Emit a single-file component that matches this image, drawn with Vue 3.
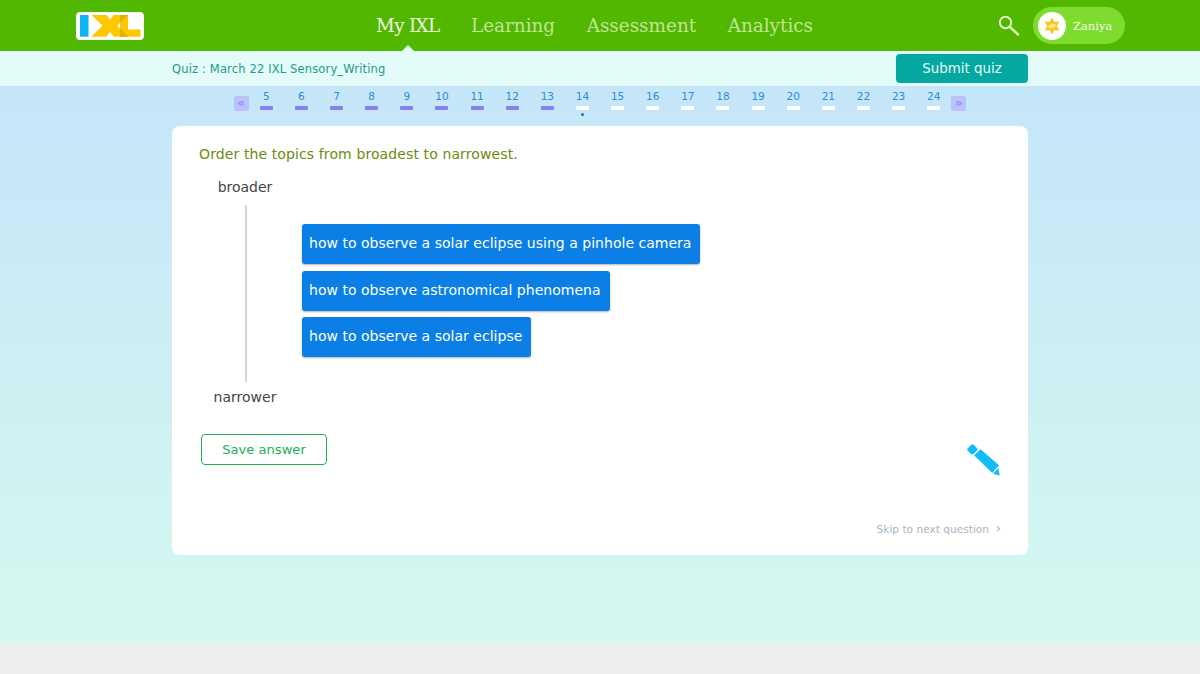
<script setup>
const questions = Array.from({ length: 20 }, (_, i) => i + 5)
const answers = [
  'how to observe a solar eclipse using a pinhole camera',
  'how to observe astronomical phenomena',
  'how to observe a solar eclipse'
]
const navItems = ['My IXL', 'Learning', 'Assessment', 'Analytics']
</script>

<template>
  <div class="page">
    <header class="topbar">
      <div class="logo">
        <svg width="68" height="28" viewBox="0 0 68 28">
          <defs>
            <clipPath id="lshape"><path d="M44 3h8v14.500h12.500V24.700H44z" /></clipPath>
          </defs>
          <rect x="0.500" y="0.500" width="67" height="27" rx="3" fill="#fff" stroke="#f4f4f4" />
          <rect x="4" y="3" width="8.500" height="21.700" fill="#0db4f2" />
          <path d="M15.500 3h15l3.500 4.500L37.500 3H52L41 13.700l11.500 11H38L34 20l-4 4.700H15l11.500-11z" fill="#fdc800" />
          <path d="M44 3h8v14.500h12.500V24.700H44z" fill="#fdc800" />
          <g clip-path="url(#lshape)">
            <path d="M15.500 3h15l3.500 4.500L37.500 3H52L41 13.700l11.500 11H38L34 20l-4 4.700H15l11.500-11z" fill="#e3b000" />
          </g>
        </svg>
      </div>
      <nav class="mainnav">
        <a v-for="(item, i) in navItems" :key="item" class="navlink" :class="{ active: i === 0 }">{{ item }}</a>
      </nav>
      <div class="topright">
        <svg class="search" width="22" height="22" viewBox="0 0 22 22" fill="none" stroke="#dff2c4">
          <circle cx="7.500" cy="7.500" r="5.700" stroke-width="2" />
          <path d="M12 12l8 7.500" stroke-width="2.400" stroke-linecap="round" />
        </svg>
        <div class="user">
          <span class="avatar">
            <svg width="18" height="18" viewBox="0 0 18 18">
              <path d="M9 .500l2.400 4.200 5-.1-2.500 4.400 2.500 4.400-5-.1L9 17.500l-2.400-4.200-5 .1 2.500-4.400-2.500-4.400 5 .1z" fill="#f6c821" />
              <ellipse cx="9" cy="9" rx="4" ry="2" fill="#f8e48c" transform="rotate(-20 9 9)" />
            </svg>
          </span>
          <span class="username">Zaniya</span>
        </div>
      </div>
    </header>

    <div class="subbar">
      <div class="quizname">Quiz : March 22 IXL Sensory_Writing</div>
      <button class="submit">Submit quiz</button>
    </div>

    <main class="content">
      <div class="pager">
        <span class="arrow">«</span>
        <div v-for="q in questions" :key="q" class="pg" :class="{ done: q < 14, current: q === 14 }">
          <span class="num">{{ q }}</span>
          <span class="bar"></span>
        </div>
        <span class="arrow">»</span>
      </div>

      <section class="card">
        <p class="prompt">Order the topics from broadest to narrowest.</p>
        <div class="sorter">
          <div class="scale">
            <span class="label">broader</span>
            <span class="line"></span>
            <span class="label">narrower</span>
          </div>
          <div class="answers">
            <div v-for="a in answers" :key="a" class="answer">{{ a }}</div>
          </div>
        </div>
        <div class="actions">
          <button class="save">Save answer</button>
          <svg class="pencil" width="34" height="34" viewBox="0 0 34 34" fill="#12bcfb">
            <path d="M.800 4.200l3.400-3.400a1.800 1.800 0 0 1 2.500 0l3.200 3.200a1.800 1.800 0 0 1 0 2.500L6.500 9.900a1.800 1.800 0 0 1-2.500 0L.800 6.700a1.800 1.800 0 0 1 0-2.500z" />
            <path d="M13.500 5.300L32 21.300 25.300 29 7 11.300z" />
            <path d="M31.300 24l1.400 7.500-6.700-1.800z" />
          </svg>
        </div>
        <div class="skip">Skip to next question <span class="chev">›</span></div>
      </section>
    </main>

    <footer class="footer"></footer>
  </div>
</template>

<style>
html, body { margin: 0; background: #eeeeee; }
</style>

<style scoped>
.page {
  width: 1200px;
  height: 674px;
  overflow: hidden;
  display: flex;
  flex-direction: column;
  font-family: "DejaVu Sans", sans-serif;
}
.topbar {
  height: 51px;
  flex: none;
  background: #52b700;
  display: flex;
  align-items: center;
  position: relative;
}
.logo {
  margin-left: 76px;
  height: 28px;
  margin-top: 1px;
}
.logo svg { display: block; }
.mainnav {
  margin-left: 232px;
  display: flex;
  gap: 31.500px;
  height: 100%;
  align-items: center;
}
.navlink {
  font-family: "DejaVu Serif", serif;
  font-size: 18.400px;
  font-weight: 400;
  color: #c0e695;
  position: relative;
  line-height: 51px;
}
.navlink.active { color: #eef9e0; letter-spacing: -0.7px; }
.navlink.active::after {
  content: "";
  position: absolute;
  left: 50%;
  bottom: 0;
  margin-left: -6px;
  border-left: 6px solid transparent;
  border-right: 6px solid transparent;
  border-bottom: 6px solid #e4fcf9;
}
.topright {
  margin-left: auto;
  margin-right: 75px;
  display: flex;
  align-items: center;
  gap: 13px;
}
.search { display: block; }
.user {
  width: 92px;
  height: 37px;
  box-sizing: border-box;
  padding-left: 5px;
  background: #7edc2e;
  border-radius: 19px;
  display: flex;
  align-items: center;
  gap: 7px;
}
.avatar {
  width: 28px;
  height: 28px;
  border-radius: 50%;
  background: #fff;
  display: flex;
  align-items: center;
  justify-content: center;
}
.username {
  font-family: "DejaVu Serif", serif;
  font-size: 11.500px;
  color: #f4fbe8;
}
.subbar {
  height: 35px;
  flex: none;
  background: #e4fcf9;
  display: flex;
  align-items: center;
  justify-content: space-between;
  padding: 0 172px;
}
.quizname {
  font-size: 11.500px;
  letter-spacing: 0.15px;
  color: #1f9a8c;
}
.submit {
  width: 132px;
  height: 29px;
  border: 0;
  border-radius: 4px;
  background: #04a8a0;
  color: #e6fbf8;
  font-family: inherit;
  font-size: 13.400px;
  padding: 0;
}
.content {
  height: 557px;
  flex: none;
  background: linear-gradient(#c5e6f9, #d4f9ef);
  display: flex;
  flex-direction: column;
  align-items: center;
}
.pager {
  height: 40px;
  display: flex;
  align-items: flex-start;
}
.arrow {
  width: 15px;
  height: 15px;
  margin-top: 10px;
  background: #bcc0fb;
  color: #8d86f4;
  border-radius: 2px;
  font-size: 13px;
  line-height: 13px;
  text-align: center;
}
.pg {
  width: 35.130px;
  display: flex;
  flex-direction: column;
  align-items: center;
  position: relative;
  padding-top: 4px;
}
.num {
  font-size: 10.500px;
  line-height: 12px;
  color: #2b8ed6;
}
.bar {
  width: 13px;
  height: 4px;
  margin-top: 4px;
  background: #fff;
  border-radius: 1px;
}
.pg.done .bar { background: #8681ee; }
.pg.current::after {
  content: "";
  position: absolute;
  top: 27px;
  width: 3px;
  height: 3px;
  border-radius: 50%;
  background: #0b75c4;
}
.card {
  width: 856px;
  height: 429px;
  box-sizing: border-box;
  background: #fff;
  border-radius: 8px;
  padding: 19px 27px 0;
  display: flex;
  flex-direction: column;
}
.prompt {
  margin: 0;
  font-size: 14px;
  letter-spacing: 0.11px;
  line-height: 18px;
  color: #6a8c10;
}
.sorter {
  margin-top: 15px;
  display: flex;
  height: 229px;
}
.scale {
  width: 92px;
  display: flex;
  flex-direction: column;
  align-items: center;
  color: #444;
  font-size: 14px;
  box-sizing: border-box;
}
.label { line-height: 18px; }
.line {
  width: 2px;
  height: 177px;
  margin: 9px 0 6px 2px;
  background: #d5d5d5;
}
.answers {
  margin-left: 11px;
  padding-top: 46px;
  display: flex;
  flex-direction: column;
  align-items: flex-start;
  gap: 6.500px;
}
.answer {
  height: 40px;
  box-sizing: border-box;
  padding: 0 9px 0 7px;
  background: #0b7fe6;
  color: #fff;
  font-size: 14px;
  letter-spacing: 0.02px;
  line-height: 39px;
  border-radius: 3px;
  box-shadow: 0 1px 2px rgba(0, 0, 0, 0.3);
}
.actions {
  margin-top: 27px;
  display: flex;
  justify-content: space-between;
  align-items: flex-start;
  padding-left: 2px;
}
.save {
  width: 126px;
  height: 31px;
  box-sizing: border-box;
  background: #fff;
  border: 1px solid #1fae55;
  border-radius: 4px;
  color: #1fae55;
  font-family: inherit;
  font-size: 13.100px;
  padding: 0;
}
.pencil {
  display: block;
  margin-top: 10px;
}
.skip {
  margin-top: 43px;
  align-self: flex-end;
  font-size: 10.600px;
  line-height: 14px;
  color: #a9b6c1;
}
.chev { margin-left: 3px; font-size: 14px; }
.footer {
  flex: 1;
  background: #eeeeee;
}
</style>
